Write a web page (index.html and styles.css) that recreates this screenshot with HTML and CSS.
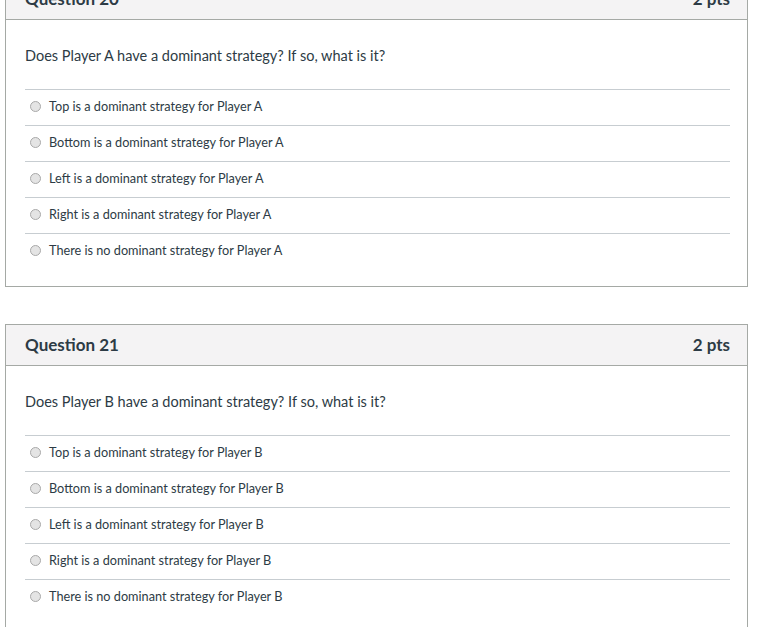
FILE: index.html
```html
<!DOCTYPE html>
<html lang="en">
<head>
    <meta charset="UTF-8" />
    <meta name="viewport" content="width=device-width, initial-scale=1" />
    <title>Quiz</title>
    <link rel="stylesheet" href="styles.css">
</head>
<body>
    <div class="quiz">
        <div class="question first">
            <div class="question-header">
                <span class="title">Question 20</span>
                <span class="points">2 pts</span>
            </div>
            <div class="question-body">
                <p class="question-text">Does Player A have a dominant strategy? If so, what is it?</p>
                <div class="answers">
                    <label class="answer"><span class="radio"></span>Top is a dominant strategy for Player A</label>
                    <label class="answer"><span class="radio"></span>Bottom is a dominant strategy for Player A</label>
                    <label class="answer"><span class="radio"></span>Left is a dominant strategy for Player A</label>
                    <label class="answer"><span class="radio"></span>Right is a dominant strategy for Player A</label>
                    <label class="answer"><span class="radio"></span>There is no dominant strategy for Player A</label>
                </div>
            </div>
        </div>

        <div class="question">
            <div class="question-header">
                <span class="title">Question 21</span>
                <span class="points">2 pts</span>
            </div>
            <div class="question-body">
                <p class="question-text">Does Player B have a dominant strategy? If so, what is it?</p>
                <div class="answers">
                    <label class="answer"><span class="radio"></span>Top is a dominant strategy for Player B</label>
                    <label class="answer"><span class="radio"></span>Bottom is a dominant strategy for Player B</label>
                    <label class="answer"><span class="radio"></span>Left is a dominant strategy for Player B</label>
                    <label class="answer"><span class="radio"></span>Right is a dominant strategy for Player B</label>
                    <label class="answer"><span class="radio"></span>There is no dominant strategy for Player B</label>
                </div>
            </div>
        </div>
    </div>
</body>
</html>
```

FILE: styles.css
```css
body {
    margin: 0;
    font-family: Lato, 'Liberation Sans', sans-serif;
    background: #fff;
    color: #2d3b45;
    overflow: hidden;
}

.quiz {
    padding-left: 5px;
}

.question {
    width: 741px;
    border: 1px solid #a5a9a5;
    margin-bottom: 37px;
}

.question.first {
    margin-top: -22px;
}

.question-header {
    height: 39px;
    display: flex;
    align-items: center;
    justify-content: space-between;
    padding: 0 17px 1px 19px;
    background: #f4f3f4;
    border-bottom: 1px solid #a5a9a5;
}

.title,
.points {
    font-size: 17px;
    font-weight: bold;
}

.question-body {
    padding: 0 17px 17px 19px;
}

.question-text {
    margin: 0;
    padding: 26px 0 23px;
    font-size: 14.5px;
    line-height: 20px;
}

.answer {
    display: flex;
    align-items: center;
    height: 32px;
    padding-bottom: 3px;
    border-top: 1px solid #c7cdd1;
    font-size: 12.7px;
}

.radio {
    width: 9px;
    height: 9px;
    margin: 0 8px 0 5px;
    border: 1px solid #a9a9a9;
    border-radius: 50%;
    background: #e4e4e4;
}
```
